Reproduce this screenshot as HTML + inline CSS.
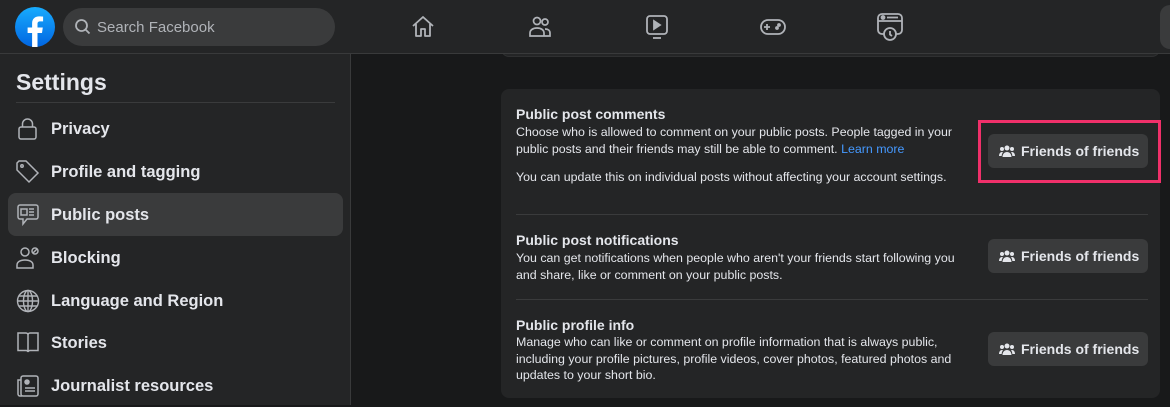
<!DOCTYPE html>
<html><head><meta charset="utf-8"><style>
*{margin:0;padding:0;box-sizing:border-box}
body{width:1170px;height:405px;overflow:hidden;background:#18191a;font-family:"Liberation Sans",sans-serif;color:#e4e6eb;position:relative}
.top{position:absolute;left:0;top:0;width:1170px;height:54px;background:#242526;border-bottom:1px solid #393a3b}
.side{position:absolute;left:0;top:54px;width:351px;height:351px;background:#242526;border-right:1px solid #393a3b}
.abs{position:absolute}
.item{position:absolute;left:8px;width:335px;height:43px;border-radius:8px}
.item span{position:absolute;left:43px;top:13px;font-size:16.5px;font-weight:bold;color:#e4e6eb}
.item svg{position:absolute;left:8px;top:10px}
.card{position:absolute;left:501px;width:659px;background:#242526;border-radius:8px}
.t{position:absolute;left:516px;font-size:14px;font-weight:bold;color:#e4e6eb}
.d{position:absolute;left:516px;font-size:12.4px;line-height:16.5px;color:#e4e6eb;width:470px;white-space:nowrap}
.btn{position:absolute;left:988px;width:160px;height:34px;background:#3a3b3c;border-radius:6px;font-size:14px;font-weight:bold;color:#e4e6eb;padding-left:33px;line-height:34px}
.btn svg{position:absolute;left:11px;top:11px}
.hr{position:absolute;left:516px;width:632px;height:1px;background:#3a3b3c}
</style></head><body>
<div class="card" style="top:20px;height:37px;border:1px solid #2f3031"></div>
<div class="top"></div>
<svg class="abs" style="left:15px;top:7px" width="40" height="40" viewBox="0 0 40 40"><defs><linearGradient id="g" x1="0" y1="0" x2="0" y2="1"><stop offset="0" stop-color="#18acfe"/><stop offset="1" stop-color="#0165e1"/></linearGradient></defs><circle cx="20" cy="20" r="20" fill="url(#g)"/><path d="M22.5 40V26h4.5l.8-5.5h-5.3v-3.4c0-1.6.5-2.7 2.8-2.7h2.8V9.6c-.5-.1-2.2-.2-4.1-.2-4 0-6.9 2.5-6.9 7v4.1H12.6V26h4.5v14z" fill="#fff"/></svg>
<div class="abs" style="left:63px;top:8px;width:272px;height:38px;border-radius:19px;background:#3a3b3c"></div>
<svg class="abs" style="left:74px;top:18px" width="18" height="18" viewBox="0 0 18 18" fill="none" stroke="#b0b3b8" stroke-width="1.8"><circle cx="7.5" cy="7.5" r="5.5"/><path d="M11.5 11.5l4 4"/></svg>
<div class="abs" style="left:97px;top:19px;font-size:15px;color:#b0b3b8">Search Facebook</div>
<svg class="abs" style="left:410px;top:14px" width="26" height="26" viewBox="0 0 26 26" fill="none" stroke="#b0b3b8" stroke-width="1.8" stroke-linejoin="round"><path d="M3 12L13 3l10 9M6 10v12h5v-7h4v7h5V10"/></svg>
<svg class="abs" style="left:527px;top:14px" width="26" height="26" viewBox="0 0 26 26" fill="none" stroke="#b0b3b8" stroke-width="1.7"><circle cx="10" cy="7" r="3.5"/><circle cx="18" cy="8" r="3"/><path d="M3 22v-3c0-3 3-5 7-5s7 2 7 5v3zM17 22h6v-3c0-2.5-2-4-5-4"/></svg>
<svg class="abs" style="left:644px;top:14px" width="26" height="26" viewBox="0 0 26 26" fill="none" stroke="#b0b3b8" stroke-width="1.8"><rect x="3" y="2" width="20" height="18" rx="3"/><path d="M10 7v8l6-4z" fill="#b0b3b8"/><path d="M9 24h8"/></svg>
<svg class="abs" style="left:759px;top:14px" width="28" height="26" viewBox="0 0 28 26" fill="none" stroke="#b0b3b8" stroke-width="1.8"><rect x="2" y="6" width="24" height="14" rx="7"/><path d="M8 10v6M5 13h6"/><circle cx="18" cy="14" r="1" fill="#b0b3b8"/><circle cx="20" cy="11" r="1" fill="#b0b3b8"/></svg>
<svg class="abs" style="left:876px;top:12px" width="28" height="30" viewBox="0 0 28 30" fill="none" stroke="#b0b3b8" stroke-width="1.8"><rect x="2" y="2" width="24" height="20" rx="4"/><path d="M2 9h24"/><circle cx="7" cy="5.5" r="1.5" fill="#b0b3b8"/><path d="M11 5.5h11"/><circle cx="14" cy="22" r="6" fill="#242526"/><path d="M14 19v3.5l2 1.5"/></svg>
<div class="abs" style="left:1160px;top:5px;width:20px;height:44px;border-radius:20px;background:#3a3b3c"></div>

<div class="side"></div>
<div class="abs" style="left:16px;top:69px;font-size:23px;font-weight:bold;color:#e4e6eb">Settings</div>
<div class="abs" style="left:16px;top:102px;width:319px;height:1px;background:#3a3b3c"></div>
<div class="item" style="top:107px"><svg width="24" height="24" viewBox="0 0 24 24" fill="none" stroke="#b0b3b8" stroke-width="1.5"><rect x="3" y="10" width="17" height="12" rx="2"/><path d="M6.5 10V7a5 5 0 0110 0v3"/></svg><span>Privacy</span></div>
<div class="item" style="top:150px"><svg width="24" height="24" viewBox="0 0 24 24" fill="none" stroke="#b0b3b8" stroke-width="1.5"><path d="M1 3v7l12 12 9-9L10 1H3z"/><circle cx="6" cy="6" r="1.2"/></svg><span>Profile and tagging</span></div>
<div class="item" style="top:193px;background:#3a3b3c"><svg width="24" height="24" viewBox="0 0 24 24" fill="none" stroke="#b0b3b8" stroke-width="1.5"><path d="M4 2h16a2 2 0 012 2v10a2 2 0 01-2 2H11l-4 5v-5H4a2 2 0 01-2-2V4a2 2 0 012-2z"/><rect x="5" y="6" width="6" height="6"/><path d="M13 6h5M13 9h5M13 12h5"/></svg><span>Public posts</span></div>
<div class="item" style="top:236px"><svg width="24" height="24" viewBox="0 0 24 24" fill="none" stroke="#b0b3b8" stroke-width="1.5"><circle cx="9" cy="6" r="4"/><path d="M1 22v-3c0-3 3-5 8-5s8 2 8 5v3z"/><circle cx="19" cy="5" r="3"/><path d="M17 7l4-4"/></svg><span>Blocking</span></div>
<div class="item" style="top:279px"><svg width="24" height="24" viewBox="0 0 24 24" fill="none" stroke="#b0b3b8" stroke-width="1.4"><circle cx="12" cy="12" r="10.5"/><ellipse cx="12" cy="12" rx="4.5" ry="10.5"/><path d="M1.5 12h21M3 7h18M3 17h18M12 1.5v21"/></svg><span>Language and Region</span></div>
<div class="item" style="top:321px"><svg width="24" height="24" viewBox="0 0 24 24" fill="none" stroke="#b0b3b8" stroke-width="1.5"><path d="M2 2h8a2 2 0 012 2v17a2 2 0 00-2-1.5H2zM22 2h-8a2 2 0 00-2 2v17a2 2 0 012-1.5h8z"/></svg><span>Stories</span></div>
<div class="item" style="top:364px"><svg width="24" height="24" viewBox="0 0 24 24" fill="none" stroke="#b0b3b8" stroke-width="1.5"><rect x="5" y="2" width="17" height="20" rx="2"/><path d="M5 6H2v14a2 2 0 002 2h2"/><circle cx="11" cy="8" r="2" fill="#b0b3b8"/><path d="M9 14h10M9 17h10"/></svg><span>Journalist resources</span></div>

<div class="card" style="top:89px;height:309px"></div>
<div class="t" style="top:106px">Public post comments</div>
<div class="d" style="top:124px">Choose who is allowed to comment on your public posts. People tagged in your<br>public posts and their friends may still be able to comment. <span style="color:#4599ff">Learn more</span></div>
<div class="d" style="top:169px">You can update this on individual posts without affecting your account settings.</div>
<div class="hr" style="top:214px"></div>
<div class="t" style="top:232px">Public post notifications</div>
<div class="d" style="top:250px">You can get notifications when people who aren't your friends start following you<br>and share, like or comment on your public posts.</div>
<div class="hr" style="top:299px"></div>
<div class="t" style="top:317px">Public profile info</div>
<div class="d" style="top:334px">Manage who can like or comment on profile information that is always public,<br>including your profile pictures, profile videos, cover photos, featured photos and<br>updates to your short bio.</div>
<div class="abs" style="left:978px;top:120px;width:183px;height:63px;border:3px solid #f0306a"></div>
<div class="btn" style="top:134px"><svg width="16" height="12" viewBox="0 0 16 12" fill="#e4e6eb"><circle cx="8" cy="3" r="2.5"/><circle cx="3" cy="4" r="2"/><circle cx="13" cy="4" r="2"/><path d="M3.5 12c0-3 2-5 4.5-5s4.5 2 4.5 5zM0 11c0-2 1-4 3-4l1 .3C3 8.5 2.7 10 2.7 11zM16 11c0-2-1-4-3-4l-1 .3c1 1.2 1.3 2.7 1.3 3.7z"/></svg>Friends of friends</div>
<div class="btn" style="top:239px"><svg width="16" height="12" viewBox="0 0 16 12" fill="#e4e6eb"><circle cx="8" cy="3" r="2.5"/><circle cx="3" cy="4" r="2"/><circle cx="13" cy="4" r="2"/><path d="M3.5 12c0-3 2-5 4.5-5s4.5 2 4.5 5zM0 11c0-2 1-4 3-4l1 .3C3 8.5 2.7 10 2.7 11zM16 11c0-2-1-4-3-4l-1 .3c1 1.2 1.3 2.7 1.3 3.7z"/></svg>Friends of friends</div>
<div class="btn" style="top:332px"><svg width="16" height="12" viewBox="0 0 16 12" fill="#e4e6eb"><circle cx="8" cy="3" r="2.5"/><circle cx="3" cy="4" r="2"/><circle cx="13" cy="4" r="2"/><path d="M3.5 12c0-3 2-5 4.5-5s4.5 2 4.5 5zM0 11c0-2 1-4 3-4l1 .3C3 8.5 2.7 10 2.7 11zM16 11c0-2-1-4-3-4l-1 .3c1 1.2 1.3 2.7 1.3 3.7z"/></svg>Friends of friends</div>
</body></html>
